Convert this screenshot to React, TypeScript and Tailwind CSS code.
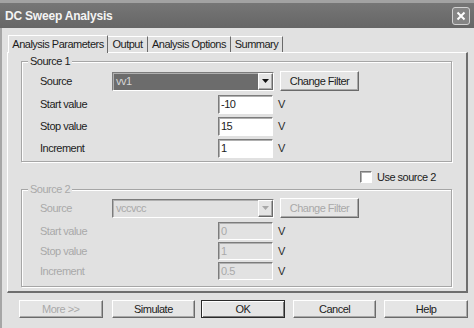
const raised =
  "bg-[#e5e5e5] border border-t-white border-l-white border-r-[#6a6a6a] border-b-[#6a6a6a] shadow-[inset_-1px_-1px_0_#a9a9a9]";
const sunken =
  "border border-t-[#7c7c7c] border-l-[#7c7c7c] border-r-white border-b-white shadow-[inset_1px_1px_0_#b0b0b0]";

function Arrow({ disabled }: { disabled?: boolean }) {
  return (
    <div className={`w-[15px] h-full flex items-center justify-center ${raised}`}>
      <svg width="7" height="4" viewBox="0 0 7 4">
        <polygon points="0,0 7,0 3.5,4" fill={disabled ? "#a8a8a8" : "#111"} />
      </svg>
    </div>
  );
}

function ValueRow({
  label,
  value,
  disabled,
  h,
  mt,
}: {
  label: string;
  value: string;
  disabled?: boolean;
  h: string;
  mt: string;
}) {
  return (
    <div className={`flex items-center ${h} ${mt}`}>
      <span className={`w-[72px] ${disabled ? "text-[#a9a9a9]" : ""}`}>{label}</span>
      <div
        className={`ml-[106px] w-[55px] h-full flex items-center pl-[2px] ${sunken} ${
          disabled ? "bg-[#e2e2e2] text-[#a9a9a9]" : "bg-white"
        }`}
      >
        {value}
      </div>
      <span className="ml-[5px] text-[#2a2a2a]">V</span>
    </div>
  );
}

export default function App() {
  return (
    <div className="w-[474px] h-[328px] overflow-hidden bg-[#e1e1e1] font-['Liberation_Sans',Arial,sans-serif] text-[11px] tracking-[-0.5px] text-[#1c1c1c] flex flex-col">
      {/* title bar */}
      <div className="h-[3px] bg-[#a2a2a2]" />
      <div className="h-[25px] bg-linear-to-b from-[#767676] to-[#666666] flex items-center justify-between pl-[5px] pr-[4px]">
        <span className="text-[#f4f4f4] font-bold text-[12px] tracking-[-0.2px]">DC Sweep Analysis</span>
        <div className="w-[18px] h-[18px] border border-[#d2d2d2] rounded-[3px] bg-[#858585] flex items-center justify-center">
          <svg width="10" height="10" viewBox="0 0 10 10">
            <path d="M1.5 1.5 L8.5 8.5 M8.5 1.5 L1.5 8.5" stroke="#fff" strokeWidth="2" />
          </svg>
        </div>
      </div>

      <div className="flex-1 flex flex-col pl-[5px] pr-[6px] pt-[6px] border-l-2 border-[#a6a6a6]">
        {/* tabs */}
        <div className="flex items-end h-[18px] pl-[1px]">
          <div className="w-[100px] h-[18px] -mb-px z-10 bg-[#e1e1e1] border-t border-l border-white border-r border-r-[#6a6a6a] flex items-center justify-center">
            Analysis Parameters
          </div>
          <div className="w-[40px] h-[16px] border-t border-white border-r border-r-[#6a6a6a] flex items-center justify-center">
            Output
          </div>
          <div className="w-[83px] h-[16px] border-t border-white border-r border-r-[#6a6a6a] flex items-center justify-center">
            Analysis Options
          </div>
          <div className="w-[52px] h-[16px] border-t border-white border-r border-r-[#6a6a6a] flex items-center justify-center">
            Summary
          </div>
        </div>

        {/* panel */}
        <div className="h-[241px] border-t border-l border-white border-r-2 border-b-2 border-r-[#6e6e6e] border-b-[#6e6e6e] pl-[13px] pt-[8px]">
          <div className="relative w-[431px] h-[101px] border border-[#a6a6a6] shadow-[1px_1px_0_#fff,inset_1px_1px_0_#fff] pl-[18px] pt-[9px]">
            <span className="absolute -top-[7px] left-[6px] px-[2px] bg-[#e1e1e1] leading-[13px]">Source 1</span>
            <div className="flex items-center h-[20px]">
              <span className="w-[72px]">Source</span>
              <div className={`w-[162px] h-[19px] flex items-center justify-between bg-[#6c6c6c] ${sunken}`}>
                <span className="pl-[3px] text-[#d6d6d6]">vv1</span>
                <Arrow />
              </div>
              <div className={`ml-[6px] w-[79px] h-[20px] flex items-center justify-center ${raised}`}>Change Filter</div>
            </div>
            <ValueRow label="Start value" value="-10" h="h-[19px]" mt="mt-[4px]" />
            <ValueRow label="Stop value" value="15" h="h-[19px]" mt="mt-[3px]" />
            <ValueRow label="Increment" value="1" h="h-[19px]" mt="mt-[3px]" />
          </div>

          <div className="flex items-center h-[12px] mt-[9px] pl-[339px]">
            <div className={`w-[12px] h-[12px] bg-white ${sunken}`} />
            <span className="ml-[5px]">Use source 2</span>
          </div>

          <div className="relative mt-[6px] w-[431px] h-[98px] border border-[#a6a6a6] shadow-[1px_1px_0_#fff,inset_1px_1px_0_#fff] pl-[18px] pt-[8px] text-[#a9a9a9]">
            <span className="absolute -top-[7px] left-[6px] px-[2px] bg-[#e1e1e1] leading-[13px]">Source 2</span>
            <div className="flex items-center h-[20px]">
              <span className="w-[72px]">Source</span>
              <div className={`w-[162px] h-[19px] flex items-center justify-between bg-[#e1e1e1] ${sunken}`}>
                <span className="pl-[3px]">vccvcc</span>
                <Arrow disabled />
              </div>
              <div className={`ml-[6px] w-[79px] h-[20px] flex items-center justify-center ${raised}`}>Change Filter</div>
            </div>
            <ValueRow label="Start value" value="0" disabled h="h-[18px]" mt="mt-[4px]" />
            <ValueRow label="Stop value" value="1" disabled h="h-[18px]" mt="mt-[2px]" />
            <ValueRow label="Increment" value="0.5" disabled h="h-[18px]" mt="mt-[2px]" />
          </div>
        </div>

        {/* buttons */}
        <div className="flex mt-[7px] pl-[12px]">
          <div className={`w-[84px] h-[18px] flex items-center justify-center text-[#a9a9a9] ${raised}`}>More &gt;&gt;</div>
          <div className={`ml-[9px] w-[84px] h-[18px] flex items-center justify-center ${raised}`}>Simulate</div>
          <div className="ml-[6px] w-[84px] h-[18px] flex items-center justify-center bg-[#e5e5e5] border border-[#2a2a2a] shadow-[inset_1px_1px_0_#fff,inset_-1px_-1px_0_#7a7a7a]">
            OK
          </div>
          <div className={`ml-[8px] w-[84px] h-[18px] flex items-center justify-center ${raised}`}>Cancel</div>
          <div className={`ml-[8px] w-[84px] h-[18px] flex items-center justify-center ${raised}`}>Help</div>
        </div>
      </div>
    </div>
  );
}
